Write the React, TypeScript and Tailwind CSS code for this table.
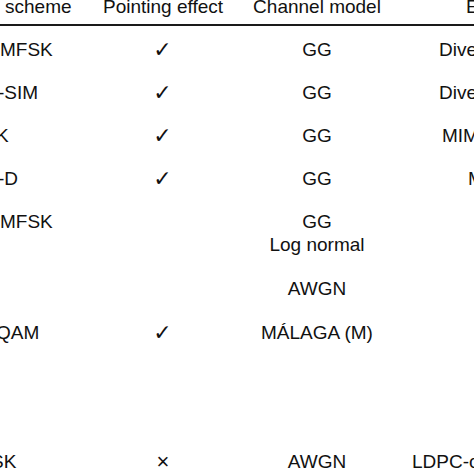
import React from 'react';

type Row = {
  scheme: string;
  schemeOffset: string;
  pointing: string;
  channel: string[];
  extra: string;
  extraOffset: string;
  rowClass: string;
};

const rows: Row[] = [
  { scheme: 'MFSK', schemeOffset: 'ml-0', pointing: '✓', channel: ['GG'], extra: 'Diversity', extraOffset: 'pl-[29px]', rowClass: 'pt-[12px] pb-[10px]' },
  { scheme: '-SIM', schemeOffset: 'ml-[-2px]', pointing: '✓', channel: ['GG'], extra: 'Diversity', extraOffset: 'pl-[29px]', rowClass: 'py-[10px]' },
  { scheme: 'K', schemeOffset: 'ml-[-4px]', pointing: '✓', channel: ['GG'], extra: 'MIMO', extraOffset: 'pl-[32px]', rowClass: 'py-[10px]' },
  { scheme: '-D', schemeOffset: 'ml-[-2px]', pointing: '✓', channel: ['GG'], extra: 'MIMO', extraOffset: 'pl-[58px]', rowClass: 'py-[10px]' },
  { scheme: 'MFSK', schemeOffset: 'ml-0', pointing: '', channel: ['GG', 'Log normal'], extra: '', extraOffset: 'pl-0', rowClass: 'pt-[10px] pb-[11px]' },
  { scheme: '', schemeOffset: 'ml-0', pointing: '', channel: ['AWGN'], extra: '', extraOffset: 'pl-0', rowClass: 'py-[10px]' },
  { scheme: 'QAM', schemeOffset: 'ml-[-4px]', pointing: '✓', channel: ['MÁLAGA (M)'], extra: '', extraOffset: 'pl-0', rowClass: 'pt-[11px] h-[130px]' },
  { scheme: 'SK', schemeOffset: 'ml-[-9px]', pointing: '×', channel: ['AWGN'], extra: 'LDPC-coded', extraOffset: 'pl-[2px]', rowClass: 'py-[10px]' },
];

const Mark: React.FC<{ value: string }> = ({ value }) => {
  if (value === '✓') {
    return <span className="font-['DejaVu_Sans',sans-serif] font-bold text-[22px] leading-[23px] ml-[-1px]">✓</span>;
  }
  if (value === '×') {
    return <span className="font-['Liberation_Sans',sans-serif] text-[22px] leading-[23px]">×</span>;
  }
  return null;
};

const App: React.FC = () => {
  return (
    <div className="w-[474px] h-[474px] overflow-hidden bg-white text-[#111] font-['Liberation_Sans',Arial,sans-serif] text-[19px] leading-[23px]">
      <div className="w-[700px]">
        <div className="flex mt-[-5px] pb-[6px] border-b-2 border-[#1a1a1a] whitespace-nowrap">
          <div className="w-[102px] overflow-hidden">
            <span className="inline-block ml-[5px]">scheme</span>
          </div>
          <div className="w-[122px] text-center">Pointing effect</div>
          <div className="w-[186px] text-center">Channel model</div>
          <div className="pl-[56px]">Error correction</div>
        </div>

        {rows.map((row, idx) => (
          <div key={idx} className={`flex whitespace-nowrap ${row.rowClass}`}>
            <div className="w-[102px] overflow-hidden">
              <span className={`inline-block ${row.schemeOffset}`}>{row.scheme}</span>
            </div>
            <div className="w-[122px] flex justify-center items-start">
              <Mark value={row.pointing} />
            </div>
            <div className="w-[186px] flex flex-col items-center">
              {row.channel.map((c, i) => (
                <span key={i}>{c}</span>
              ))}
            </div>
            <div className={row.extraOffset}>{row.extra}</div>
          </div>
        ))}
      </div>
    </div>
  );
};

export default App;
